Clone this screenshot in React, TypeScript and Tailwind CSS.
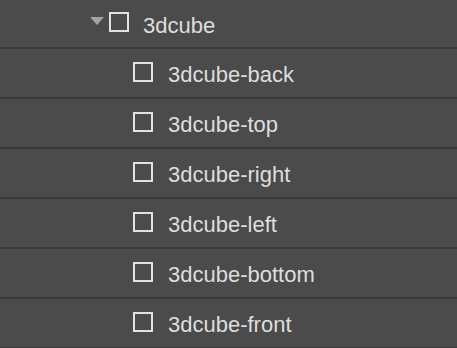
export default function App() {
  const children = ["3dcube-back", "3dcube-top", "3dcube-right", "3dcube-left", "3dcube-bottom", "3dcube-front"];
  return (
    <div className="w-[457px] h-[348px] overflow-hidden bg-[#4b4b4b] text-[#dedede]" style={{ fontFamily: '"Liberation Sans", Arial, sans-serif' }}>
      <div className="h-[49px] border-b-2 border-[#393939] flex items-center pl-[90px]">
        <svg width="14" height="9" viewBox="0 0 14 9" className="mr-[5px] mb-[4px]">
          <polygon points="0,0 14,0 7,8" fill="#a3a3a3" />
        </svg>
        <div className="w-[20px] h-[20px] border-2 border-[#e2e2e2] mb-[3px]" />
        <span className="ml-[14px] mt-[4px] text-[22px] leading-none">3dcube</span>
      </div>
      {children.map((c) => (
        <div key={c} className="h-[50px] border-b-2 border-[#393939] flex items-center pl-[133px]">
          <div className="w-[20px] h-[20px] border-2 border-[#e2e2e2] mb-[3px]" />
          <span className="ml-[15px] mt-[4px] text-[22px] leading-none">{c}</span>
        </div>
      ))}
    </div>
  );
}
